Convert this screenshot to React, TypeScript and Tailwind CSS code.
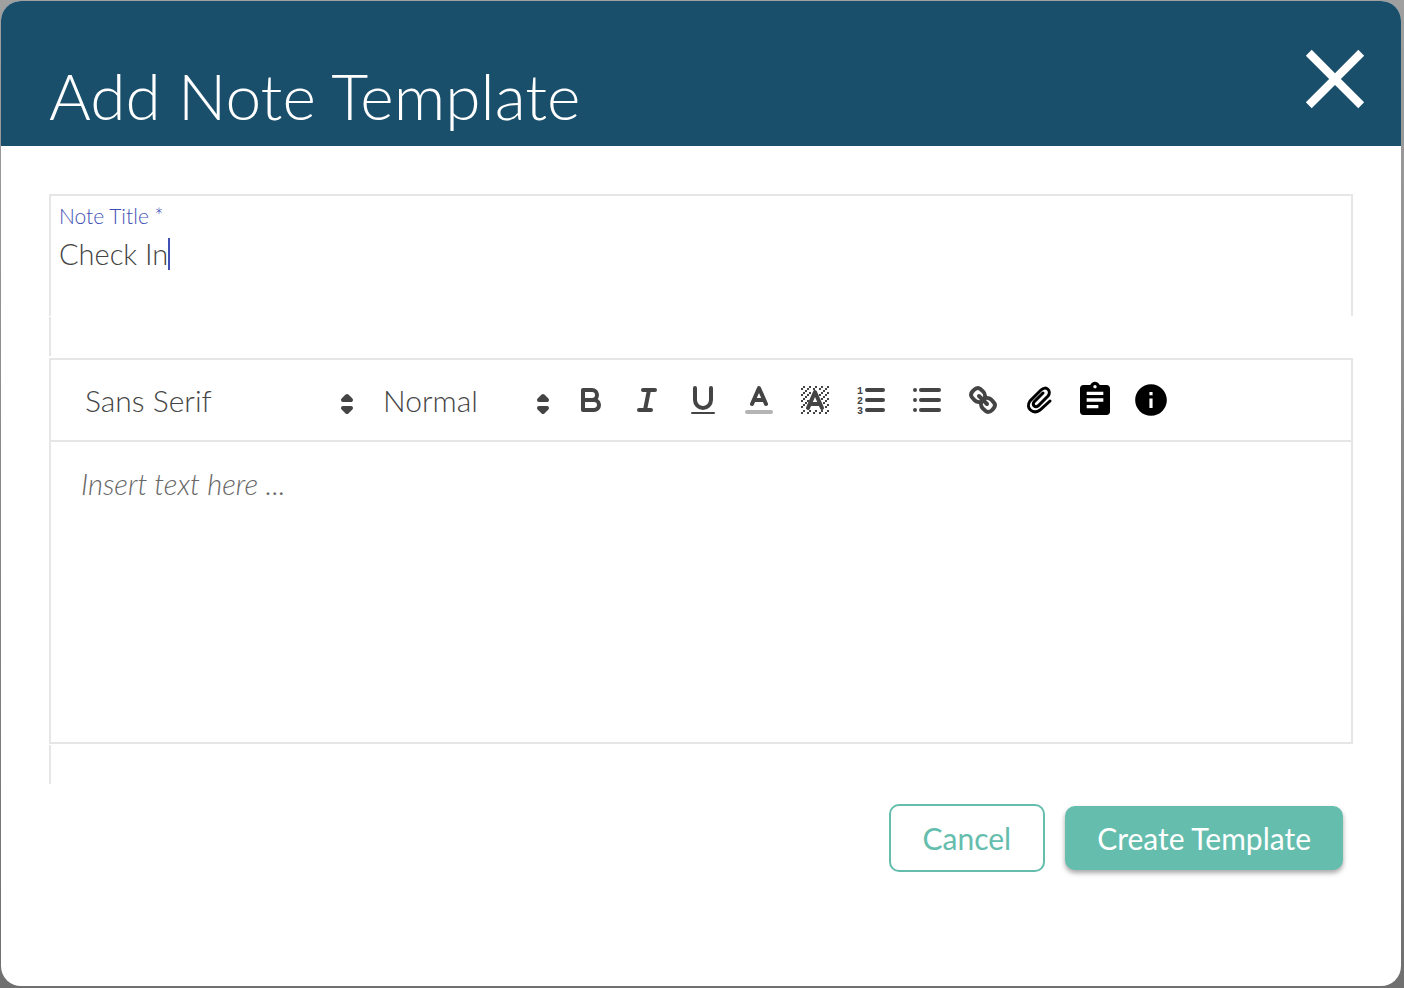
import { useState } from 'react';
import type { ReactNode } from 'react';
import { MdAssignment, MdClose, MdInfo } from 'react-icons/md';

const FONT_OPTIONS = ['Sans Serif', 'Serif', 'Monospace'];
const SIZE_OPTIONS = ['Small', 'Normal', 'Large', 'Huge'];

// the hatching keeps clear of the letter in the middle of the icon
function isHatched(x: number, y: number) {
  if ((x + y) % 3 !== 2) return false;
  if (y < 4 || y > 13) return true;
  const half = 1.5 + (y - 4) * 0.38;
  return Math.abs(x + 0.5 - 9) > half;
}

const hatchCells = Array.from({ length: 14 * 14 }, (_, i) => ({
  x: 2 + (i % 14),
  y: 2 + Math.floor(i / 14),
})).filter(({ x, y }) => isHatched(x, y));

function EditorIcon({ children }: { children: ReactNode }) {
  return (
    <svg
      viewBox="0 0 18 18"
      className="w-9 h-9 shrink-0"
      fill="none"
      stroke="currentColor"
      strokeWidth="2"
      strokeLinecap="round"
      strokeLinejoin="round"
      aria-hidden="true"
    >
      {children}
    </svg>
  );
}

function ToolButton({ label, dark, children }: { label: string; dark?: boolean; children: ReactNode }) {
  return (
    <button
      type="button"
      aria-label={label}
      className={`w-14 h-12 shrink-0 flex items-center justify-center ${dark ? 'text-black' : 'text-[#444]'}`}
    >
      {children}
    </button>
  );
}

function Picker({
  label,
  options,
  value,
  onChange,
  className,
}: {
  label: string;
  options: string[];
  value: string;
  onChange: (value: string) => void;
  className: string;
}) {
  return (
    <div className={`relative h-12 shrink-0 text-[#444] ${className}`}>
      <select
        aria-label={label}
        value={value}
        onChange={(e) => onChange(e.target.value)}
        className="w-full h-full pl-[18px] appearance-none bg-transparent text-[30px] font-light outline-none"
      >
        {options.map((option) => (
          <option key={option}>{option}</option>
        ))}
      </select>
      <span className="absolute right-0 top-2.5 pointer-events-none">
        <EditorIcon>
          <polygon fill="currentColor" points="7 11 9 13 11 11 7 11" />
          <polygon fill="currentColor" points="7 7 9 5 11 7 7 7" />
        </EditorIcon>
      </span>
    </div>
  );
}

function Toolbar() {
  const [font, setFont] = useState('Sans Serif');
  const [size, setSize] = useState('Normal');

  return (
    <div className="flex items-center px-4 py-4 border-2 border-[#e6e6e6]">
      <Picker label="Font" options={FONT_OPTIONS} value={font} onChange={setFont} className="w-[298px]" />
      <Picker label="Size" options={SIZE_OPTIONS} value={size} onChange={setSize} className="w-[196px] mr-0.5" />
      <ToolButton label="Bold">
        <EditorIcon>
          <path d="M5,4H9.5A2.5,2.5,0,0,1,12,6.5v0A2.5,2.5,0,0,1,9.5,9H5V4Z" />
          <path d="M5,9h5.5A2.5,2.5,0,0,1,13,11.5v0A2.5,2.5,0,0,1,10.5,14H5V9Z" />
        </EditorIcon>
      </ToolButton>
      <ToolButton label="Italic">
        <EditorIcon>
          <path d="M7 4H13M5 14H11M8 14L10 4" />
        </EditorIcon>
      </ToolButton>
      <ToolButton label="Underline">
        <EditorIcon>
          <path d="M5,3V9a4.012,4.012,0,0,0,4,4H9a4.012,4.012,0,0,0,4-4V3" />
          <rect x="3" y="15" width="12" height="1" rx="0.5" fill="currentColor" stroke="none" />
        </EditorIcon>
      </ToolButton>
      <ToolButton label="Text color">
        <EditorIcon>
          <path d="M3 15H15" opacity="0.4" />
          <path d="M5.5 11L9 3L12.5 11M11.63 9H6.38" />
        </EditorIcon>
      </ToolButton>
      <ToolButton label="Background color">
        <EditorIcon>
          <g fill="currentColor" stroke="none">
            {hatchCells.map(({ x, y }) => (
              <rect key={`${x}-${y}`} x={x} y={y} width="1" height="1" />
            ))}
          </g>
          <path d="M5.5 13L9 5L12.5 13M11.63 11H6.38" />
        </EditorIcon>
      </ToolButton>
      <ToolButton label="Numbered list">
        <EditorIcon>
          <path d="M7 4H15M7 9H15M7 14H15" />
          <g
            fill="currentColor"
            stroke="none"
            fontSize="5"
            className="font-['Liberation_Mono',monospace] font-bold"
          >
            <text x="2" y="6">1</text>
            <text x="2" y="11">2</text>
            <text x="2" y="16">3</text>
          </g>
        </EditorIcon>
      </ToolButton>
      <ToolButton label="Bulleted list">
        <EditorIcon>
          <path d="M6 4H15M6 9H15M6 14H15M3 4H3M3 9H3M3 14H3" />
        </EditorIcon>
      </ToolButton>
      <ToolButton label="Link">
        <EditorIcon>
          <path d="M7 7L11 11" />
          <path d="M8.9,4.577a3.476,3.476,0,0,1,.36,4.679A3.476,3.476,0,0,1,4.577,8.9C3.185,7.5,2.035,6.4,4.217,4.217S7.5,3.185,8.9,4.577Z" />
          <path d="M13.423,9.1a3.476,3.476,0,0,0-4.679-.36,3.476,3.476,0,0,0,.36,4.679c1.392,1.392,2.5,2.542,4.679.36S14.815,10.5,13.423,9.1Z" />
        </EditorIcon>
      </ToolButton>
      <ToolButton label="Attach file" dark>
        <svg
          viewBox="0 0 36 36"
          className="w-9 h-9"
          fill="none"
          stroke="currentColor"
          strokeWidth="3"
          strokeLinecap="round"
          aria-hidden="true"
        >
          <path d="M29 19L19 28C12 33 4 26 9 19L20 8C25 3 31 9 27 14L17 24C14 26 11 23 13 20L22 11" />
        </svg>
      </ToolButton>
      <ToolButton label="Insert template" dark>
        <MdAssignment className="w-10 h-10" />
      </ToolButton>
      <ToolButton label="Help" dark>
        <MdInfo className="w-[38px] h-[38px]" />
      </ToolButton>
    </div>
  );
}

export default function App() {
  const [title, setTitle] = useState('Check In');
  const [body, setBody] = useState('');

  return (
    <div className="min-h-screen flex pt-px pl-px pr-[3px] pb-0.5 bg-linear-to-b from-[#a0a0a0] via-[#888] to-[#707070] font-['Lato','Open_Sans',sans-serif]">
      <div
        role="dialog"
        aria-labelledby="dialog-title"
        className="flex-1 min-w-0 flex flex-col bg-white rounded-[20px] overflow-hidden"
      >
        <header className="flex items-start justify-between bg-[#194f6b] pl-12 pr-4 pt-7 pb-2">
          <h1 id="dialog-title" className="pt-6 text-[64px] leading-[85px] font-light text-white">
            Add Note Template
          </h1>
          <button type="button" aria-label="Close" className="text-white">
            <MdClose className="w-[100px] h-[100px]" />
          </button>
        </header>

        <form className="px-12 pt-12 pb-12" onSubmit={(e) => e.preventDefault()}>
          <div className="h-[122px] px-2 pt-2 border-2 border-b-0 border-[#e6e6e6]">
            <label htmlFor="note-title" className="block text-[21px] leading-6 font-light text-[#3f51b5]">
              Note Title *
            </label>
            <div className="flex items-center h-8 mt-2.5">
              <input
                id="note-title"
                required
                value={title}
                onChange={(e) => setTitle(e.target.value)}
                className="[field-sizing:content] text-[29px] leading-8 font-light text-[#444] caret-[#3f51b5] outline-none"
              />
              <span className="w-0.5 h-8 bg-[#3f51b5]" />
            </div>
          </div>
          <div className="h-[39px] mt-px mb-0.5 border-l-2 border-[#e6e6e6]" />

          <Toolbar />
          <textarea
            aria-label="Note text"
            placeholder="Insert text here ..."
            value={body}
            onChange={(e) => setBody(e.target.value)}
            className="block w-full h-[302px] px-[30px] py-6 resize-none border-2 border-t-0 border-[#e6e6e6] text-[29px] leading-9 text-[#444] outline-none placeholder:italic placeholder:font-light placeholder:text-[#666]"
          />
          <div className="h-[39px] mt-px border-l-2 border-[#e6e6e6]" />

          <div className="flex justify-end items-center gap-5 pt-5 pr-2.5">
            <button
              type="button"
              className="h-[68px] px-8 rounded-[10px] border-2 border-[#64bdad] text-[30px] text-[#64bdad]"
            >
              Cancel
            </button>
            <button
              type="submit"
              className="h-16 px-8 rounded-[10px] bg-[#64bdad] text-[30px] text-white shadow-[0_3px_5px_rgba(0,0,0,0.35)]"
            >
              Create Template
            </button>
          </div>
        </form>
      </div>
    </div>
  );
}
